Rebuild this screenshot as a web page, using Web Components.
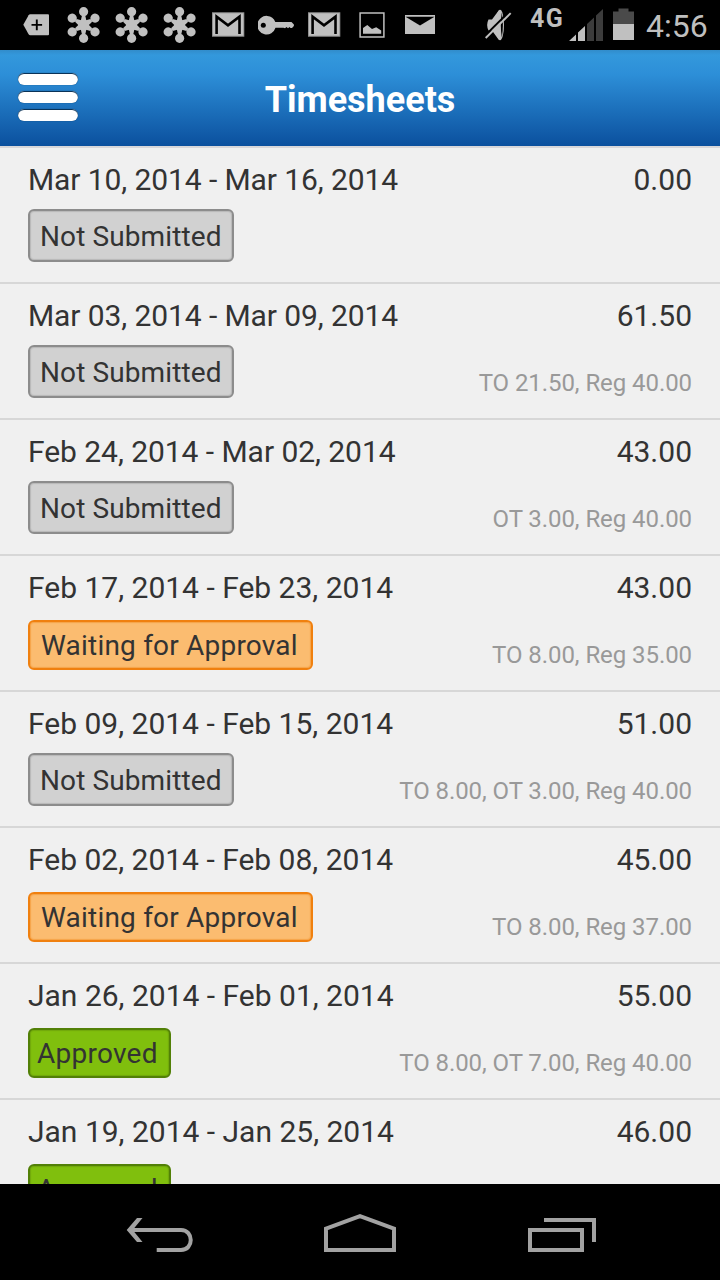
<!DOCTYPE html>
<html lang="en">
<head>
<meta charset="utf-8">
<title>Timesheets</title>
<style>
    body {
        margin: 0;
        background: #000;
        font-family: Roboto, sans-serif;
    }
</style>
</head>
<body>
<timesheet-app>
    <status-bar slot="status" network="4G" time="4:56"></status-bar>
    <title-bar slot="header">Timesheets</title-bar>
    <timesheet-row hours="0.00" status="none">Mar 10, 2014 - Mar 16, 2014</timesheet-row>
    <timesheet-row hours="61.50" status="none" detail="TO 21.50, Reg 40.00">Mar 03, 2014 - Mar 09, 2014</timesheet-row>
    <timesheet-row hours="43.00" status="none" detail="OT 3.00, Reg 40.00">Feb 24, 2014 - Mar 02, 2014</timesheet-row>
    <timesheet-row hours="43.00" status="waiting" detail="TO 8.00, Reg 35.00">Feb 17, 2014 - Feb 23, 2014</timesheet-row>
    <timesheet-row hours="51.00" status="none" detail="TO 8.00, OT 3.00, Reg 40.00">Feb 09, 2014 - Feb 15, 2014</timesheet-row>
    <timesheet-row hours="45.00" status="waiting" detail="TO 8.00, Reg 37.00">Feb 02, 2014 - Feb 08, 2014</timesheet-row>
    <timesheet-row hours="55.00" status="approved" detail="TO 8.00, OT 7.00, Reg 40.00">Jan 26, 2014 - Feb 01, 2014</timesheet-row>
    <timesheet-row hours="46.00" status="approved">Jan 19, 2014 - Jan 25, 2014</timesheet-row>
    <nav-bar slot="nav"></nav-bar>
</timesheet-app>

<script>
/**
 * Page frame: status bar, header, scrolling list and navigation bar
 */
class TimesheetApp extends HTMLElement {
    connectedCallback() {
        this.attachShadow({ mode: 'open' });
        this.shadowRoot.innerHTML = `
            <style>
                :host {
                    display: flex;
                    flex-direction: column;
                    width: 720px;
                    height: 1280px;
                    overflow: hidden;
                }
                main {
                    flex: 1;
                    min-height: 0;
                    overflow: hidden;
                    background: #f0f0f0;
                    border-top: 2px solid #d7d7da;
                }
            </style>
            <slot name="status"></slot>
            <slot name="header"></slot>
            <main><slot></slot></main>
            <slot name="nav"></slot>
        `;
    }
}

const ARM = `
    <path d="M-2.800-4.500L-1.700-9H1.700L2.800-4.500V4.500L1.700 9H-1.700L-2.800 4.500Z"/>
    <circle cy="-13.300" r="4.600"/><circle cy="13.300" r="4.600"/>`;
const FLOWER = `
    <g transform="translate(83.600 25)">
        <circle r="5.400"/>
        <g>${ARM}</g>
        <g transform="rotate(59)">${ARM}</g>
        <g transform="rotate(-59)">${ARM}</g>
    </g>`;
const GMAIL = `
    <path d="M212 12.300H244.300V36.700H212Z" fill="#909090"/>
    <path d="M213 13.300H243.300V35.700H213Z"/>
    <path d="M216.600 34V16.700L228 25.400L239.500 16.700V34" fill="none" stroke="#000" stroke-width="2.600"/>`;

/**
 * Each icon is [left, width, markup], drawn on the 50px high strip of the status bar
 */
const ICONS = {
    add: [23, 27, `
        <path d="M23.300 24.700L28.600 15.200Q29.200 14.200 30.300 14.200H48Q49 14.200 49 15.200V34.300Q49 35.300 48 35.300H30.300Q29.200 35.300 28.600 34.300Z"/>
        <path d="M36.800 19.500V30.300M31.500 24.900H42.100" stroke="#000" stroke-width="1.900"/>`],
    flower: [67, 34, FLOWER],
    gmail: [212, 33, GMAIL],
    key: [258, 37, `
        <path d="M267.300 15.900A9.300 9.300 0 0 1 275.300 21.900H291.500L293.900 24.500V26L292 28.100H290.500L289.500 27L288 28.300L286.500 27L285 28.300L283.500 27.800H275.500A9.300 9.300 0 1 1 267.300 15.900Z"/>
        <circle cx="263.300" cy="25.200" r="2.500" fill="#000"/>`],
    picture: [359, 26, `
        <path d="M360.100 13.100H383.900V36.900H360.100Z" fill="none" stroke="#c0c0c0" stroke-width="1.500"/>
        <path d="M363 33.700V28L367.300 24.900L372 29L376.200 27.300L381.200 30.500V33.700Z"/>`],
    mail: [405, 30, `
        <path d="M405 15H435V34H405Z"/>
        <path d="M405.500 16.800H434.500L420 25.500Z" fill="#000"/>`],
    mute: [485, 27, `
        <path d="M488.500 19.500H492L498.500 10.700H501V39.500H498.500L492 30.500H488.500Q485.800 25 488.500 19.500Z"/>
        <ellipse cx="500" cy="25" rx="4" ry="15.200"/>
        <path d="M501.800 12.500Q504 25 501.800 37.500Q499.800 25 501.800 12.500Z" fill="#000"/>
        <path d="M484.200 36.500L509.200 11.700" stroke="#000" stroke-width="2"/>
        <path d="M485.700 38L510.700 13.200" stroke="#c0c0c0" stroke-width="1.900"/>`],
    signal: [569, 34, `
        <path d="M569 41L576 34.400V41ZM578 32.500L585 26V41H578Z"/>
        <path d="M587 24L594 17.400V41H587ZM596 15.500L603 9V41H596Z" fill="#3c3c3c"/>`],
    battery: [613, 21, `
        <path d="M613 11.500H618.500V8.500H628.500V11.500H634V24H613Z" fill="#4a4a4a"/>
        <path d="M613 24H634V40H613Z"/>`]
};

/**
 * Android status bar with notification icons on the left, system state on the right
 */
class StatusBar extends HTMLElement {
    icon(name) {
        const [x, width, markup] = ICONS[name];
        return `<svg class="${name}" width="${width}" height="50" viewBox="${x} 0 ${width} 50">${markup}</svg>`;
    }

    icons(...names) {
        return names.map((name) => this.icon(name)).join('');
    }

    connectedCallback() {
        this.attachShadow({ mode: 'open' });
        this.shadowRoot.innerHTML = `
            <style>
                :host {
                    display: flex;
                    justify-content: space-between;
                    flex: none;
                    height: 50px;
                    padding: 0 12px 0 23px;
                    background: #000;
                    color: #bfbfbf;
                }
                svg { display: block; flex: none; fill: #c0c0c0; }
                div { display: flex; }
                .add { margin-right: 17px; }
                .flower { margin-right: 14px; }
                .gmail { margin-left: 1px; margin-right: 13px; }
                .key { margin-right: 12px; }
                .picture { margin: 0 20px 0 5px; }
                .network {
                    width: 38px;
                    margin-left: 18px;
                    font: bold 25px/38px Roboto, sans-serif;
                    letter-spacing: 1.5px;
                }
                .signal { margin-left: 1px; }
                .battery { margin-left: 10px; }
                .time { margin-left: 12px; width: 62px; font-size: 32px; line-height: 52px; }
            </style>
            <div>
                ${this.icons('add', 'flower', 'flower', 'flower', 'gmail', 'key', 'gmail', 'picture', 'mail')}
            </div>
            <div>
                ${this.icon('mute')}
                <span class="network">${this.getAttribute('network')}</span>
                ${this.icons('signal', 'battery')}
                <span class="time">${this.getAttribute('time')}</span>
            </div>
        `;
    }
}

/**
 * Blue header with the menu button
 */
class TitleBar extends HTMLElement {
    connectedCallback() {
        this.attachShadow({ mode: 'open' });
        this.shadowRoot.innerHTML = `
            <style>
                :host {
                    display: grid;
                    grid-template-columns: 96px 1fr 96px;
                    align-items: center;
                    flex: none;
                    height: 96px;
                    background: linear-gradient(#318ccb 0, #3398dc 5px, #2d8fd8 24px, #0b509e 100%);
                    color: #fff;
                }
                .menu { display: grid; gap: 6px; width: 60px; padding: 0 0 2px 18px; }
                .menu i {
                    height: 12px;
                    border-radius: 6px;
                    background: #fff;
                    box-shadow: inset 0 1px 0 #0a3358, 0 0 1px #0a3358;
                }
                h1 { margin: 0; padding-top: 3px; font-size: 36px; line-height: 42px; text-align: center; }
            </style>
            <div class="menu"><i></i><i></i><i></i></div>
            <h1><slot></slot></h1>
        `;
    }
}

/**
 * Rounded label which shows the state of a timesheet
 */
class StatusBadge extends HTMLElement {
    connectedCallback() {
        this.attachShadow({ mode: 'open' });
        this.shadowRoot.innerHTML = `
            <style>
                :host {
                    display: flex;
                    box-sizing: border-box;
                    width: 206px;
                    height: 53px;
                    padding: 9px 0 0 10px;
                    border: 2px solid #8c8c8c;
                    border-radius: 6px;
                    background: #d1d1d1;
                    box-shadow: inset 0 0 1px 1px rgba(0, 0, 0, 0.12);
                    font-size: 28px;
                    line-height: 34px;
                    letter-spacing: 0.11px;
                    white-space: nowrap;
                }
                :host([type="waiting"]) {
                    width: 285px;
                    height: 50px;
                    padding: 7px 0 0 11px;
                    border-color: #f0800f;
                    background: #fbbc70;
                    box-shadow: inset 0 0 1px 1px rgba(240, 128, 15, 0.4);
                    letter-spacing: 0.2px;
                }
                :host([type="approved"]) {
                    width: 143px;
                    height: 50px;
                    padding: 7px 0 0 7px;
                    border-color: #528007;
                    background: #80bf0d;
                    letter-spacing: 0.25px;
                }
            </style>
            <slot></slot>
        `;
    }
}

const LABELS = { none: 'Not Submitted', waiting: 'Waiting for Approval', approved: 'Approved' };

/**
 * One timesheet: period, total hours, status and hours breakdown
 */
class TimesheetRow extends HTMLElement {
    connectedCallback() {
        const status = this.getAttribute('status');
        const months = this.textContent.split('Mar').length - 1;
        this.attachShadow({ mode: 'open' });
        this.shadowRoot.innerHTML = `
            <style>
                :host {
                    display: block;
                    box-sizing: border-box;
                    height: 136px;
                    padding: 14px 28px 0;
                    border-bottom: 2px solid #d7d7d7;
                    color: #333;
                    font-size: 30px;
                    line-height: 36px;
                }
                .line { display: flex; justify-content: space-between; }
                .period { letter-spacing: ${months * -0.045}px; }
                .state { height: 64px; align-items: flex-end; }
                .detail {
                    padding-bottom: 1px;
                    color: #999;
                    font-size: 24px;
                    line-height: 28px;
                    letter-spacing: -0.07px;
                }
            </style>
            <div class="line">
                <span class="period"><slot></slot></span>
                <span>${this.getAttribute('hours')}</span>
            </div>
            <div class="line state">
                <status-badge type="${status}">${LABELS[status]}</status-badge>
                <span class="detail">${this.getAttribute('detail') || ''}</span>
            </div>
        `;
    }
}

/**
 * Back, home and recent apps buttons
 */
class NavBar extends HTMLElement {
    connectedCallback() {
        this.attachShadow({ mode: 'open' });
        this.shadowRoot.innerHTML = `
            <style>
                :host {
                    display: flex;
                    flex: none;
                    height: 96px;
                    padding-left: 126px;
                    background: #000;
                }
                svg { flex: none; fill: none; stroke: #a2a2a2; stroke-width: 4; }
                .home { margin: 0 132px 0 130px; }
            </style>
            <svg width="68" height="96" viewBox="126 1184 68 96"><path d="M129 1230H181C194 1230 194 1250 181 1250H156.700"/><path d="M137 1218H142.500L132.700 1230L142.500 1242H137L126.700 1230Z" fill="#a2a2a2" stroke="none"/></svg>
            <svg class="home" width="72" height="96" viewBox="324 1184 72 96"><path d="M326 1250V1228.700L360 1216.200L394 1228.700V1250Z"/></svg>
            <svg width="68" height="96" viewBox="528 1184 68 96"><path d="M530 1230H582V1250H530ZM544 1220H594V1242"/></svg>
        `;
    }
}

customElements.define("timesheet-app", TimesheetApp);
customElements.define("status-bar", StatusBar);
customElements.define("title-bar", TitleBar);
customElements.define("status-badge", StatusBadge);
customElements.define("timesheet-row", TimesheetRow);
customElements.define("nav-bar", NavBar);
</script>
</body>
</html>
